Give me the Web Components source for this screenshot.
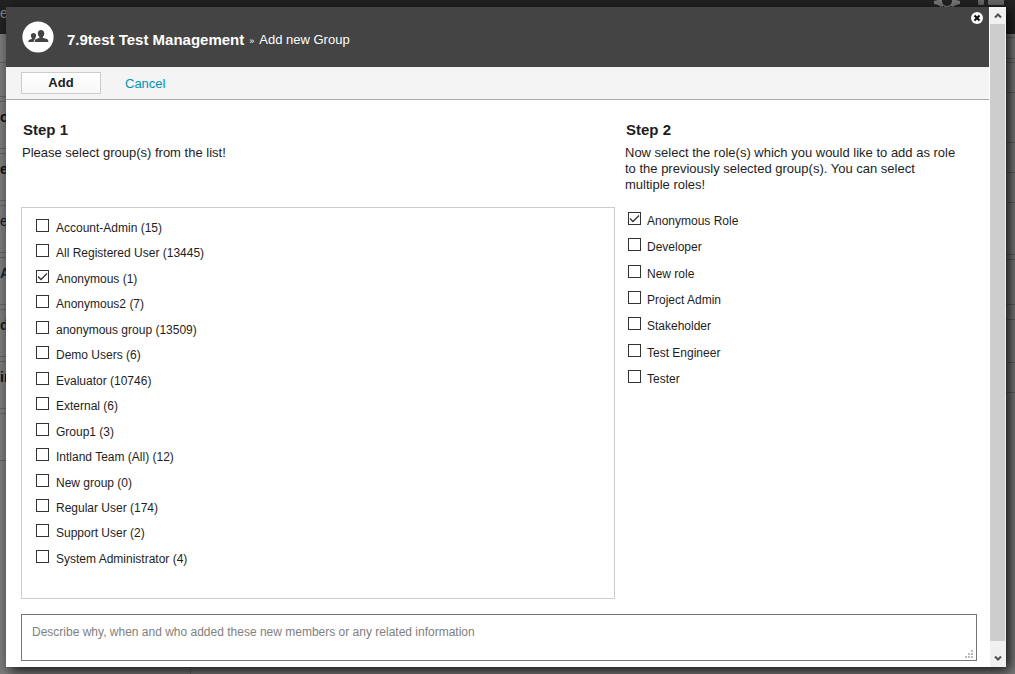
<!DOCTYPE html>
<html lang="en">
<head>
<meta charset="utf-8">
<title>Add new Group</title>
<style>
  html, body { height: 100%; margin: 0; }
  body { font: 13px/16px "Liberation Sans", Arial, sans-serif; color: #1e1e1e; overflow: hidden; }
</style>
</head>
<body>
<group-page></group-page>

<script>
const define = (name, html, setup) => customElements.define(name, class extends HTMLElement {
  connectedCallback() {
    if (this.shadowRoot) return;
    this.attachShadow({ mode: 'open' }).innerHTML = html;
    if (setup) setup.call(this, this.shadowRoot);
  }
});

/* Dimmed page that lies behind the dialog */
define('page-backdrop', `
<style>
  :host { position: absolute; inset: 0; background: #7c7c7c; display: grid; grid-template-rows: 34px 1fr; overflow: hidden; }
  header { background: #222; display: flex; justify-content: space-between; color: #888; font: 14px/26px "Liberation Sans", sans-serif; }
  .icons { display: flex; gap: 16px; padding-right: 10px; }
  svg { display: block; }
  main { display: flex; justify-content: space-between; }
  .left { width: 190px; border-right: 1px solid #666; display: grid; align-content: start; row-gap: 4px; padding-top: 28px; }
  .row { height: 46px; border: solid #646464; border-width: 1px 0; font: bold 14px/30px "Liberation Sans", sans-serif; color: #111; }
  .row.first { height: 33px; }
  .row.link { color: #123; }
  .row.blue { color: #113; font-weight: normal; }
  .row.green { color: #121; }
  .right { width: 120px; }
  .right i { display: block; border-bottom: 1px solid #626262; box-sizing: border-box; }
</style>
<header>
  <div aria-hidden="true">er</div>
  <div class="icons">
    <svg width="28" height="12" viewBox="0 0 28 12"><path d="M1 1l4-1 2-3h14l2 3 4 1v3l-4 1-3 2-3-1-1 2h-4l-1-2-3 1-3-2-4-1z" fill="#777"/><circle cx="14" cy="1" r="5" fill="#222"/></svg>
    <svg width="28" height="12" viewBox="0 0 28 12"><rect y="-2" x="1" width="6" height="7" rx="1" fill="#666"/><rect y="-2" x="11" width="16" height="7" rx="1" fill="#666"/></svg>
  </div>
</header>
<main aria-hidden="true">
  <div class="left">
    <div class="row first"></div>
    <div class="row">or</div>
    <div class="row">e</div>
    <div class="row blue">e</div>
    <div class="row link">Ac</div>
    <div class="row green">d</div>
    <div class="row">in</div>
    <div class="row"></div>
  </div>
  <div class="right"></div>
</main>`, root => {
  const right = root.querySelector('.right');
  for (const h of [4, 21, 4, 30, 50, 30, 30, 52, 5, 45, 15, 43, 30]) {
    const line = document.createElement('i');
    line.style.height = h + 'px';
    right.append(line);
  }
});

define('dialog-header', `
<style>
  :host { display: block; background: #444; color: #fff; }
  .bar { display: flex; justify-content: space-between; align-items: flex-start; height: 60px; padding: 0 6px 0 16px; }
  .title { display: flex; align-items: center; height: 60px; }
  .badge { display: block; margin-right: 13px; }
  h1 { font-size: 15px; line-height: 20px; margin: 6px 0 0; }
  .crumb { margin: 6px 0 0 5px; font-size: 13px; line-height: 20px; }
  .sep { font-size: 9px; margin-right: 5px; }
  button { all: unset; display: block; margin-top: 5px; cursor: pointer; }
  button svg { display: block; }
</style>
<div class="bar">
  <div class="title">
    <svg class="badge" width="32" height="32" viewBox="0 0 32 32" aria-hidden="true">
      <circle cx="16" cy="16" r="15.6" fill="#fff"/>
      <g fill="#444">
        <path d="M19 9c2 0 3.300 1.300 3.300 3.500 0 1.500-.6 2.700-1.500 3.400v.8l4 1.400c1 .4 1.600 1.100 1.600 3H12.600c0-1.800.5-2.600 1.600-3l3.200-1.400v-.8c-1-.7-1.600-1.900-1.600-3.400C15.800 10.300 17 9 19 9z"/>
        <path d="M11.500 12c1.700 0 2.600 1.100 2.600 2.700 0 1-.4 1.900-1 2.500v.7l.5.2c-1.300.6-1.900 1.300-2 3H6.300c0-1.500.4-2.100 1.300-2.400l2.400-.9v-.6c-.7-.6-1.100-1.400-1.100-2.500 0-1.600.9-2.700 2.600-2.700z"/>
      </g>
    </svg>
    <h1><slot name="project"></slot></h1>
    <div class="crumb"><span class="sep">»</span><slot></slot></div>
  </div>
  <button type="button" aria-label="Close">
    <svg width="12" height="12" viewBox="0 0 12 12"><circle cx="6" cy="6" r="6" fill="#fff"/><path d="M3.500 3.500l5 5m0-5l-5 5" stroke="#111" stroke-width="2.200"/></svg>
  </button>
</div>`);

define('action-bar', `
<style>
  :host { display: flex; align-items: center; gap: 24px; height: 32px; padding-left: 15px; background: #f4f4f4; border-bottom: 1px solid #aaa; }
  button { width: 80px; height: 22px; padding: 0; border: 1px solid #ccc; background: linear-gradient(#fff, #f8f8f8); font: bold 13px/20px "Liberation Sans", sans-serif; color: #1e1e1e; }
  a { color: #0093b8; text-decoration: none; font-size: 13px; padding-top: 1px; }
</style>
<button type="submit">Add</button><a href="#cancel">Cancel</a>`);

define('check-item', `
<style>
  :host { display: block; }
  label { display: flex; align-items: flex-start; gap: var(--check-gap, 7px); font-size: 12px; line-height: 20px; }
  input { appearance: none; width: 13px; height: 13px; margin: 1px 0 0; border: 1px solid #333; background: #fff; flex: none; }
  input:checked { background: #fff url("data:image/svg+xml,%3Csvg xmlns='http://www.w3.org/2000/svg' viewBox='0 0 11 11'%3E%3Cpath d='M1 5.500l3 3L10 2.500' fill='none' stroke='%23333' stroke-width='1.300'/%3E%3C/svg%3E"); }
</style>
<label><input type="checkbox"><span><slot></slot></span></label>`);

define('check-list', `
<style>
  :host { display: flex; flex-direction: column; justify-content: space-between; }
</style>
<slot></slot>`);

define('step-intro', `
<style>
  :host { display: block; height: 85px; }
  h2 { font-size: 15px; line-height: 20px; margin: 0 0 5px 1px; }
  p { margin: 0; padding-right: 16px; }
</style>
<h2><slot name="heading"></slot></h2>
<p><slot></slot></p>`);

define('note-field', `
<style>
  :host { display: block; position: relative; }
  textarea { display: block; box-sizing: border-box; width: 100%; height: 47px; padding: 8px 10px; border: 1px solid #767676; resize: none; font: 12px/18px "Liberation Sans", sans-serif; background: #fff; }
  textarea::placeholder { color: #808080; opacity: 1; }
  svg { position: absolute; right: 4px; bottom: 3px; }
</style>
<textarea aria-label="Comment" placeholder="Describe why, when and who added these new members or any related information"></textarea>
<svg width="8" height="8" fill="#bbb" aria-hidden="true"><path d="M6 0h2v2H6zM3 3h2v2H3zM6 3h2v2H6zM0 6h2v2H0zM3 6h2v2H3zM6 6h2v2H6z"/></svg>`);

define('scroll-rail', `
<style>
  :host { display: grid; grid-template-rows: 17px 1fr 26px; background: #f0f0f0; border-left: 1px solid #fff; box-sizing: border-box; width: 17px; }
  button { all: unset; display: grid; place-items: center; }
  .down { padding-top: 8px; }
  .thumb { background: #cdcdcd; margin-right: 1px; }
</style>
<button type="button" aria-label="Scroll up"><svg width="8" height="7"><path d="M1 5.500l3-3 3 3" fill="none" stroke="#505050" stroke-width="2"/></svg></button>
<div class="thumb"></div>
<button type="button" class="down" aria-label="Scroll down"><svg width="8" height="7"><path d="M1 1.500l3 3 3-3" fill="none" stroke="#505050" stroke-width="2"/></svg></button>`);

define('group-dialog', `
<style>
  :host { display: grid; grid-template-columns: 1fr auto; background: #fff; box-shadow: 4px 4px 12px rgba(0,0,0,.85); }
  form { display: flex; flex-direction: column; min-width: 0; }
  .steps { display: grid; grid-template-columns: 594fr 352fr; column-gap: 10px; padding: 20px 12px 0 15px; }
  .first step-intro { padding-left: 1px; }
  .groups { height: 351px; padding: 10px 14px 29px; border: 1px solid #ccc; margin-top: 2px; }
  .roles { height: 178px; padding: 0 3px; margin-top: 6px; --check-gap: 6px; }
  note-field { margin: 15px 12px 0 15px; }
</style>
<form>
  <dialog-header><span slot="project">7.9test Test Management</span>Add new Group</dialog-header>
  <action-bar></action-bar>
  <div class="steps">
    <section class="first">
      <step-intro><span slot="heading">Step 1</span>Please select group(s) from the list!</step-intro>
      <check-list class="groups">
        <check-item>Account-Admin (15)</check-item>
        <check-item>All Registered User (13445)</check-item>
        <check-item checked>Anonymous (1)</check-item>
        <check-item>Anonymous2 (7)</check-item>
        <check-item>anonymous group (13509)</check-item>
        <check-item>Demo Users (6)</check-item>
        <check-item>Evaluator (10746)</check-item>
        <check-item>External (6)</check-item>
        <check-item>Group1 (3)</check-item>
        <check-item>Intland Team (All) (12)</check-item>
        <check-item>New group (0)</check-item>
        <check-item>Regular User (174)</check-item>
        <check-item>Support User (2)</check-item>
        <check-item>System Administrator (4)</check-item>
      </check-list>
    </section>
    <section>
      <step-intro><span slot="heading">Step 2</span>Now select the role(s) which you would like to add as role to the previously selected group(s). You can select multiple roles!</step-intro>
      <check-list class="roles">
        <check-item checked>Anonymous Role</check-item>
        <check-item>Developer</check-item>
        <check-item>New role</check-item>
        <check-item>Project Admin</check-item>
        <check-item>Stakeholder</check-item>
        <check-item>Test Engineer</check-item>
        <check-item>Tester</check-item>
      </check-list>
    </section>
  </div>
  <note-field></note-field>
</form>
<scroll-rail></scroll-rail>`, function (root) {
  root.querySelectorAll('check-item[checked]').forEach(item => {
    item.shadowRoot.querySelector('input').checked = true;
  });
});

define('group-page', `
<style>
  :host { display: grid; position: relative; box-sizing: border-box; min-height: 100vh; padding: 7px 9px 7px 6px; }
  group-dialog { position: relative; }
</style>
<page-backdrop></page-backdrop>
<group-dialog></group-dialog>`);
</script>
</body>
</html>
